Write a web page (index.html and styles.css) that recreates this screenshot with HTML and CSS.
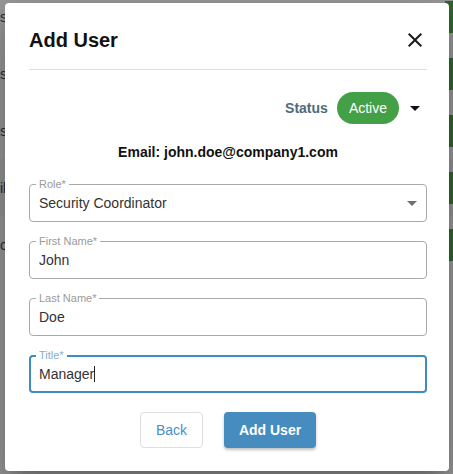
FILE: index.html
```html
<!DOCTYPE html>
<html>
<head>
<meta charset="utf-8">
<link rel="stylesheet" href="styles.css">
</head>
<body>
<div class="page">
  <div class="row"><span class="cell">s</span><span class="chip"></span></div>
  <div class="row"><span class="cell">s</span><span class="chip"></span></div>
  <div class="row"><span class="cell">s</span><span class="chip"></span></div>
  <div class="row row-alt"><span class="cell">il</span><span class="chip"></span></div>
  <div class="row"><span class="cell">c</span><span class="chip"></span></div>
</div>

<div class="dialog">
  <div class="header">
    <h2 class="title">Add User</h2>
    <svg class="close" viewBox="0 0 24 24" width="24" height="24"><path d="M19 6.41 17.59 5 12 10.59 6.41 5 5 6.41 10.59 12 5 17.59 6.41 19 12 13.41 17.59 19 19 17.59 13.41 12z"/></svg>
  </div>
  <div class="divider"></div>

  <div class="status-row">
    <span class="status-label">Status</span>
    <span class="pill">Active</span>
    <svg class="drop" viewBox="0 0 24 24" width="24" height="24"><path d="M7 10l5 5 5-5z"/></svg>
  </div>

  <div class="email">Email: john.doe@company1.com</div>

  <div class="fields">
    <div class="field">
      <span class="label">Role*</span>
      <span class="value">Security Coordinator</span>
      <svg class="select-arrow" viewBox="0 0 24 24" width="24" height="24"><path d="M7 10l5 5 5-5z"/></svg>
    </div>
    <div class="field">
      <span class="label">First Name*</span>
      <span class="value">John</span>
    </div>
    <div class="field">
      <span class="label">Last Name*</span>
      <span class="value">Doe</span>
    </div>
    <div class="field focused">
      <span class="label">Title*</span>
      <span class="value caret">Manager</span>
    </div>
  </div>

  <div class="actions">
    <button class="btn btn-back">Back</button>
    <button class="btn btn-primary">Add User</button>
  </div>
</div>
</body>
</html>
```

FILE: styles.css
```css
* { box-sizing: border-box; }
html, body {
  margin: 0;
  padding: 0;
  width: 453px;
  height: 474px;
  overflow: hidden;
  background: #999999;
  font-family: "Liberation Sans", Arial, sans-serif;
}

.page {
  display: flex;
  flex-direction: column;
  margin-top: -12px;
}
.row {
  height: 57px;
  display: flex;
  align-items: center;
  justify-content: space-between;
}
.row-alt { background: #949494; }
.cell {
  font-size: 14px;
  color: #1f2c44;
}
.chip {
  width: 8px;
  height: 32px;
  background: #2f6a2f;
}

.dialog {
  position: absolute;
  top: 3px;
  left: 5px;
  width: 444px;
  height: 468px;
  background: #fff;
  border-radius: 4px;
  padding: 17px 22px 0 24px;
  box-shadow: 0 11px 15px -7px rgba(0,0,0,.2), 0 24px 38px 3px rgba(0,0,0,.14), 0 9px 46px 8px rgba(0,0,0,.12);
  display: flex;
  flex-direction: column;
}

.header {
  height: 40px;
  display: flex;
  align-items: center;
  justify-content: space-between;
}
.title {
  margin: 0;
  font-size: 20px;
  font-weight: bold;
  color: #111;
}
.close { fill: #1a1a1a; }

.divider {
  margin-top: 9px;
  height: 1px;
  background: #dddddd;
}

.status-row {
  margin-top: 22px;
  height: 32px;
  display: flex;
  align-items: center;
  justify-content: flex-end;
}
.status-label {
  font-size: 14px;
  font-weight: bold;
  color: #4e6b7d;
  margin-right: 9px;
}
.pill {
  height: 32px;
  line-height: 32px;
  padding: 0 12px;
  border-radius: 16px;
  background: #43a047;
  color: #fff;
  font-size: 14px;
  margin-right: 4px;
}
.drop { fill: #111; }

.email {
  margin-top: 18px;
  line-height: 20px;
  font-size: 14px;
  font-weight: bold;
  color: #111;
  text-align: center;
}

.fields {
  margin-top: 22px;
  display: flex;
  flex-direction: column;
  gap: 19px;
}
.field {
  position: relative;
  height: 38px;
  border: 1px solid #a9a9a9;
  border-radius: 4px;
  padding: 0 9px;
  display: flex;
  align-items: center;
}
.label {
  position: absolute;
  top: -7px;
  left: 6px;
  padding: 0 3px;
  background: #fff;
  font-size: 11px;
  line-height: 12px;
  color: #9a9a9a;
}
.value {
  font-size: 14px;
  color: #333;
}
.select-arrow {
  position: absolute;
  right: 2px;
  top: 6px;
  fill: #707070;
}
.field.focused {
  border: 2px solid #3f8bc4;
  padding: 0 8px;
}
.field.focused .label {
  top: -8px;
  left: 5px;
  color: #7fb0d6;
}
.caret {
  border-right: 1px solid #222;
}

.actions {
  margin-top: 19px;
  display: flex;
  justify-content: center;
  gap: 21px;
}
.btn {
  height: 36px;
  font-family: "Liberation Sans", Arial, sans-serif;
  font-size: 14px;
  border-radius: 4px;
  cursor: pointer;
}
.btn-back {
  width: 63px;
  background: #fff;
  border: 1px solid #dedede;
  color: #4a8fc4;
}
.btn-primary {
  width: 92px;
  background: #468cbe;
  border: none;
  color: #fff;
  font-weight: bold;
  box-shadow: 0 2px 3px rgba(0,0,0,.25);
}
```
